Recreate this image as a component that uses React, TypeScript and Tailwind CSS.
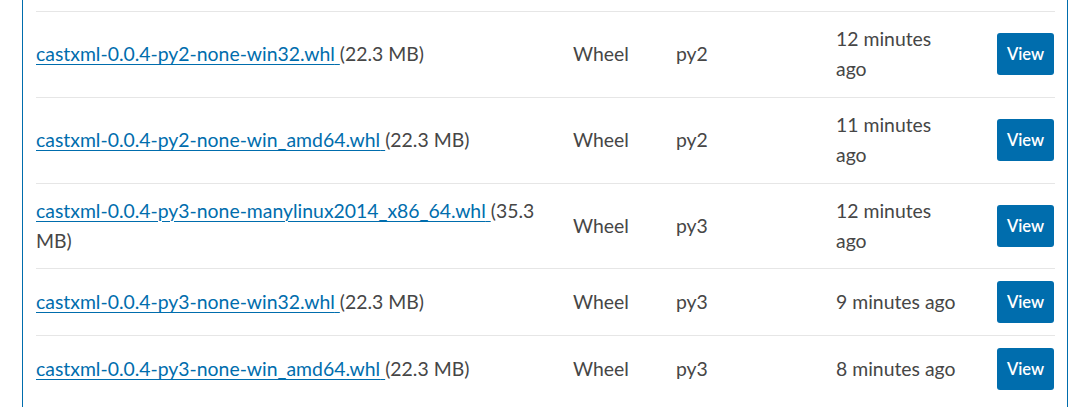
import React from "react";

interface FileRow {
  name: string;
  size: string;
  pyVersion: string;
  uploaded: string;
}

const files: FileRow[] = [
  { name: "castxml-0.0.4-py2-none-win32.whl", size: "(22.3 MB)", pyVersion: "py2", uploaded: "12 minutes ago" },
  { name: "castxml-0.0.4-py2-none-win_amd64.whl", size: "(22.3 MB)", pyVersion: "py2", uploaded: "11 minutes ago" },
  { name: "castxml-0.0.4-py3-none-manylinux2014_x86_64.whl", size: "(35.3 MB)", pyVersion: "py3", uploaded: "12 minutes ago" },
  { name: "castxml-0.0.4-py3-none-win32.whl", size: "(22.3 MB)", pyVersion: "py3", uploaded: "9 minutes ago" },
  { name: "castxml-0.0.4-py3-none-win_amd64.whl", size: "(22.3 MB)", pyVersion: "py3", uploaded: "8 minutes ago" },
];

const Row: React.FC<{ file: FileRow }> = ({ file }) => (
  <div className="grid grid-cols-[537px_103px_160px_161px_57px] items-center border-t border-[#e6e6e6] py-[12px]">
    <div className="pr-[10px]">
      <a href="#" className="text-[#006dad] underline decoration-1 underline-offset-[3px]">
        {file.name}{" "}
      </a>
      {file.size}
    </div>
    <div>Wheel</div>
    <div>{file.pyVersion}</div>
    <div className="pr-[37px]">{file.uploaded}</div>
    <button className="h-[42px] w-[57px] rounded-[3px] bg-[#006dad] text-[16.5px] font-semibold leading-none text-white">
      View
    </button>
  </div>
);

export default function App() {
  return (
    <div
      className="h-[407px] w-full overflow-hidden bg-white text-[19.4px] leading-[30.4px] text-[#464646]"
      style={{ fontFamily: "Lato, 'Liberation Sans', sans-serif" }}
    >
      <div className="ml-[22px] h-full w-[1046px] border-x border-[#006dad] pt-[11px] pl-[13px] pr-[12px]">
        {files.map((f) => (
          <Row key={f.name} file={f} />
        ))}
      </div>
    </div>
  );
}
